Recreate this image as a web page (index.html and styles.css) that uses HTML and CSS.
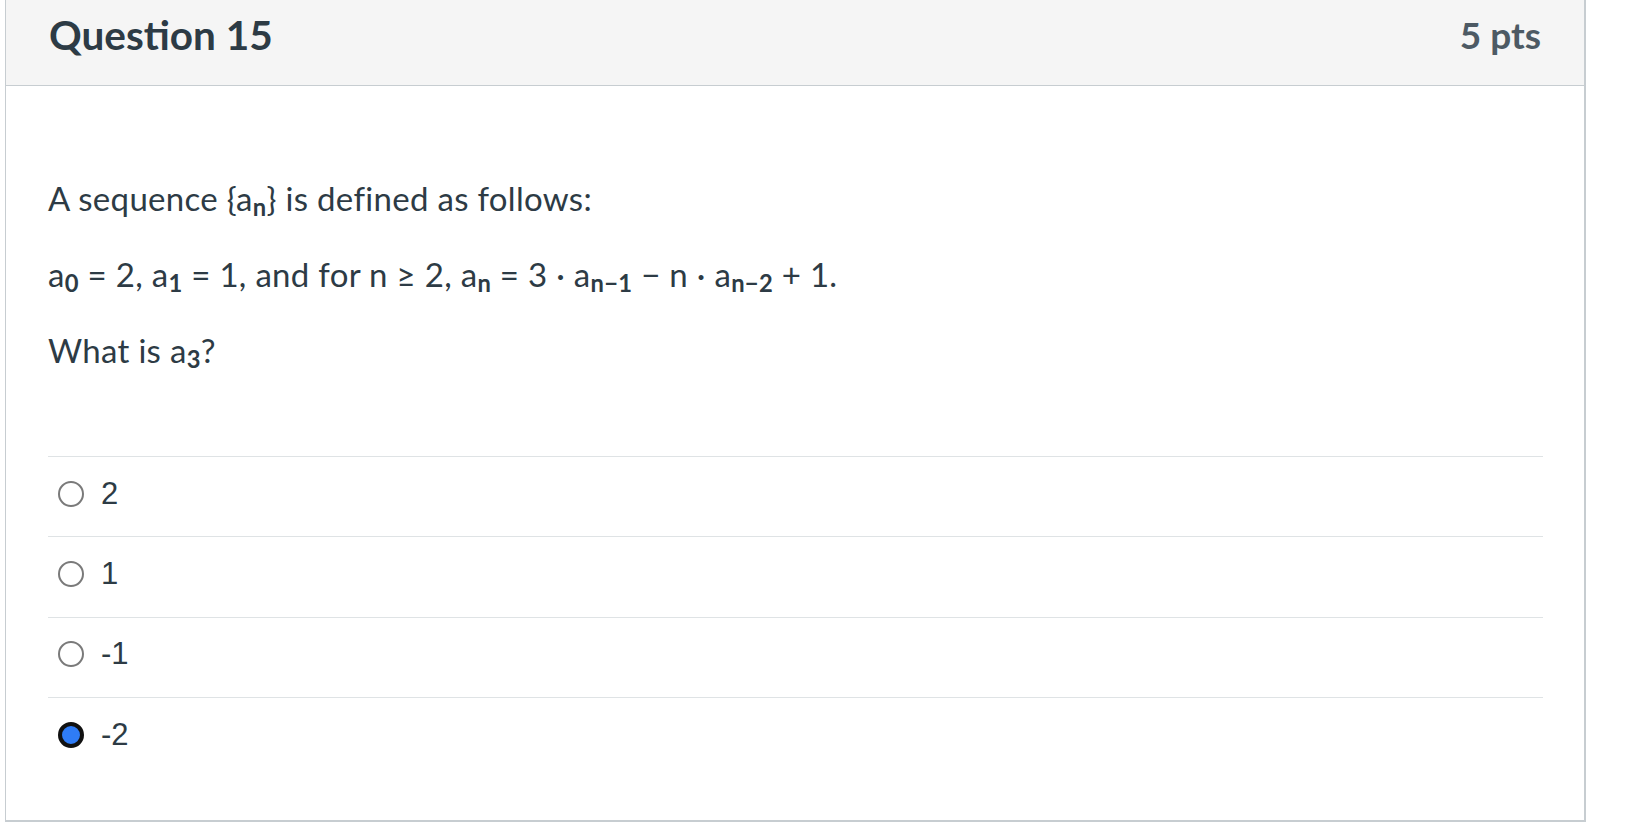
FILE: index.html
```html
<!DOCTYPE html>
<html lang="en">
<head>
<meta charset="utf-8">
<title>Question 15</title>
<link rel="stylesheet" href="styles.css">
</head>
<body>
<div class="card">
  <div class="card-header">
    <h2 class="q-title">Question 15</h2>
    <div class="q-pts">5 pts</div>
  </div>
  <div class="card-body">
    <div class="q-text">
      <p>A sequence {a<sub>n</sub>} is defined as follows:</p>
      <p>a<sub>0</sub> = 2, a<sub>1</sub> = 1, and for n ≥ 2, a<sub>n</sub> = 3 · a<sub>n−1</sub> − n · a<sub>n−2</sub> + 1.</p>
      <p>What is a<sub>3</sub>?</p>
    </div>
    <div class="answers">
      <div class="answer"><span class="radio"></span><span class="answer-text">2</span></div>
      <div class="answer"><span class="radio"></span><span class="answer-text">1</span></div>
      <div class="answer"><span class="radio"></span><span class="answer-text">-1</span></div>
      <div class="answer"><span class="radio checked"></span><span class="answer-text">-2</span></div>
    </div>
  </div>
</div>
</body>
</html>
```

FILE: styles.css
```css
html, body {
  margin: 0;
  padding: 0;
  background: #ffffff;
}

body {
  font-family: Lato, "Liberation Sans", sans-serif;
  color: #2d3b45;
}

.card {
  margin-left: 5px;
  width: 1581px;
  box-sizing: border-box;
  border: 1px solid #c7cdd1;
  border-top: none;
  border-right: 2px solid #c7cdd1;
  border-bottom: 2px solid #c7cdd1;
}

.card-header {
  height: 86px;
  box-sizing: border-box;
  background: #f5f5f5;
  border-bottom: 1px solid #c7cdd1;
  display: flex;
  justify-content: space-between;
  align-items: flex-start;
  padding: 11px 43px 0 43px;
}

.q-title {
  margin: 0;
  font-size: 40.5px;
  font-weight: 700;
  line-height: 48px;
  color: #2d3b45;
}

.q-pts {
  font-size: 37px;
  font-weight: 700;
  line-height: 48px;
  color: #4d5a64;
}

.card-body {
  padding: 89px 41px 43px 42px;
}

.q-text {
  font-size: 33px;
  line-height: 46px;
  letter-spacing: 0.3px;
}

.q-text p {
  margin: 0 0 30px 0;
}

.q-text p:last-child {
  margin-bottom: 0;
}

.q-text sub {
  font-size: 0.72em;
  font-weight: 700;
  vertical-align: -0.22em;
  line-height: 0;
}

.answers {
  margin-top: 83px;
}

.answer {
  display: flex;
  align-items: center;
  height: 80.3px;
  box-sizing: border-box;
  border-top: 1px solid #dfe3e5;
  padding-left: 10px;
  padding-bottom: 6px;
}

.radio {
  width: 26px;
  height: 26px;
  box-sizing: border-box;
  border: 2px solid #7a7a7a;
  border-radius: 50%;
  background: #fff;
  flex: none;
}

.radio.checked {
  border: 4px solid #111;
  background: #2f7cf6;
}

.answer-text {
  margin-left: 17px;
  font-family: "Liberation Sans", Arial, sans-serif;
  font-size: 31px;
  color: #2d3b45;
}
```
